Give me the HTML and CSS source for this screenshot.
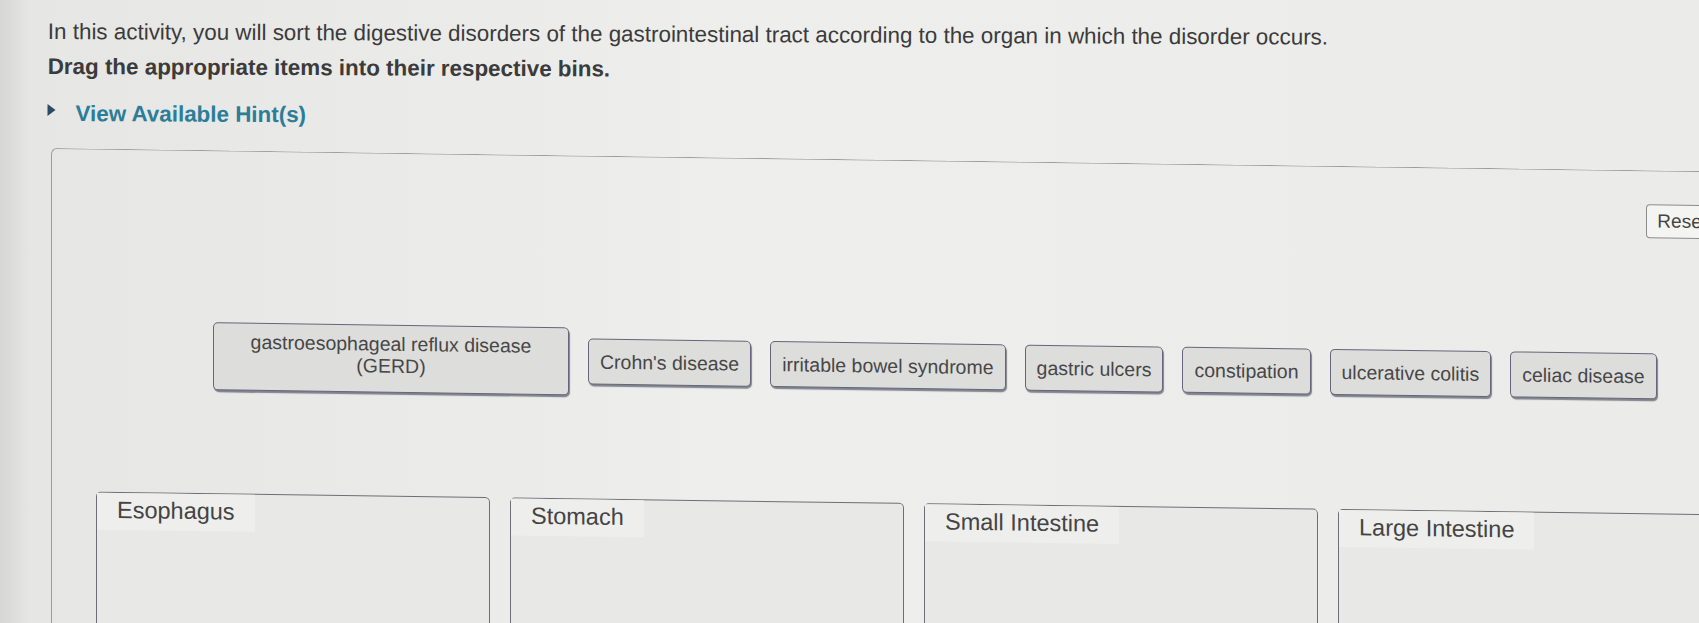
FILE: index.html
```html
<!DOCTYPE html>
<html lang="en">
<head>
    <meta charset="UTF-8">
    <title>Digestive disorders – sorting activity</title>
    <link rel="stylesheet" href="styles.css">
</head>
<body>
    <div class="page">
        <div class="intro">
            <p class="lead">In this activity, you will sort the digestive disorders of the gastrointestinal tract according to the organ in which the disorder occurs.</p>
            <p class="task">Drag the appropriate items into their respective bins.</p>
            <div class="hints">
                <span class="caret"></span>
                <a class="hint-link">View Available Hint(s)</a>
            </div>
        </div>

        <!-- sorting board -->
        <div class="board">
            <div class="toolbar">
                <button class="reset">Reset</button>
            </div>

            <div class="pool">
                <div class="chip chip-wide">gastroesophageal reflux disease<br>(GERD)</div>
                <div class="chip">Crohn's disease</div>
                <div class="chip">irritable bowel syndrome</div>
                <div class="chip">gastric ulcers</div>
                <div class="chip">constipation</div>
                <div class="chip">ulcerative colitis</div>
                <div class="chip">celiac disease</div>
            </div>

            <div class="bins">
                <div class="bin"><span class="bin-label">Esophagus</span></div>
                <div class="bin"><span class="bin-label">Stomach</span></div>
                <div class="bin"><span class="bin-label">Small Intestine</span></div>
                <div class="bin"><span class="bin-label">Large Intestine</span></div>
            </div>
        </div>
    </div>
</body>
</html>
```

FILE: styles.css
```css
/* page */
html, body {
    margin: 0;
    height: 100%;
    overflow: hidden;
}
body {
    font-family: "Liberation Sans", Arial, sans-serif;
    color: #3b3b3b;
    background: linear-gradient(90deg, #d6d6d4 0, #e6e6e4 30px, #eeeeec 45%, #ebebe9 100%);
}
.page {
    padding-left: 48px;
}

/* instructions */
.intro {
    transform: rotate(0.25deg);
    transform-origin: 0 0;
}
.lead {
    margin: 0;
    padding-top: 19px;
    font-size: 22.4px;
    line-height: 26px;
}
.task {
    margin: 9px 0 0;
    font-size: 22.4px;
    font-weight: bold;
    line-height: 26px;
}
.hints {
    display: flex;
    align-items: center;
    gap: 20px;
    margin-top: 21px;
    height: 26px;
}
.caret {
    width: 0;
    height: 0;
    border-top: 6px solid transparent;
    border-bottom: 6px solid transparent;
    border-left: 8px solid #2c4a63;
    margin-top: -8px;
}
.hint-link {
    color: #2b7d98;
    font-size: 22.4px;
    font-weight: bold;
    cursor: pointer;
}

/* board */
.board {
    margin-left: 3px;
    margin-top: 21px;
    width: 1700px;
    height: 560px;
    border-top: 1px solid #9c9c9c;
    border-left: 1px solid #9c9c9c;
    border-top-left-radius: 6px;
    transform: skewY(0.8deg);
    transform-origin: 0 0;
}
.toolbar {
    display: flex;
    justify-content: flex-end;
    padding-top: 33px;
    padding-right: 34px;
}
.reset {
    font-family: "Liberation Sans", Arial, sans-serif;
    font-size: 19px;
    line-height: 24px;
    color: #444;
    background: #f4f4f2;
    border: 1px solid #8c8c8c;
    border-radius: 4px;
    padding: 4px 10px;
}

.pool {
    display: flex;
    align-items: center;
    gap: 19px;
    margin-top: 104px;
    padding-left: 161px;
}
.chip {
    font-size: 19.5px;
    line-height: 22px;
    padding: 11px 11px;
    color: #474747;
    background: #dddddc;
    border: 1px solid #66667a;
    border-radius: 5px;
    box-shadow: 1px 2px 1px rgba(60, 60, 80, 0.6);
    white-space: nowrap;
}
.chip-wide {
    width: 356px;
    box-sizing: border-box;
    text-align: center;
    padding: 7px 20px 15px;
}

.bins {
    display: grid;
    grid-template-columns: repeat(4, 394px);
    gap: 20px;
    margin-top: 103px;
    padding-left: 44px;
}
.bin {
    height: 320px;
    background: #e8e8e6;
    border: 1px solid #6e6e78;
    border-radius: 5px;
}
.bin-label {
    display: inline-block;
    font-size: 23.5px;
    line-height: 27px;
    padding: 4px 20px 6px;
    color: #444;
    background: #eeeeec;
}
```
